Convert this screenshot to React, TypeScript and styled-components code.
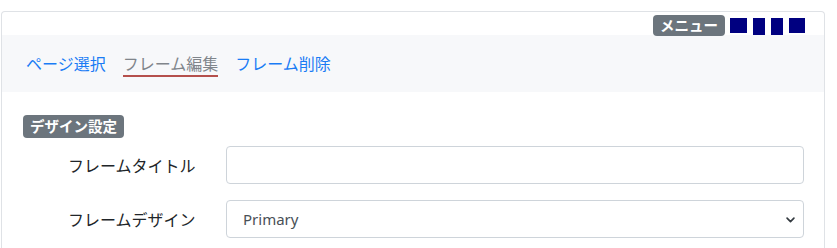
import React from 'react';
import styled, { createGlobalStyle } from 'styled-components';

const GlobalStyle = createGlobalStyle`
  body {
    margin: 0;
    background: #fff;
    font-family: "Noto Sans", "Noto Sans CJK JP", sans-serif;
    color: #212529;
  }
`;

const App: React.FC = () => (
  <>
    <GlobalStyle />
    <Page>
      <Card>
        <TopBar>
          <Badge>メニュー</Badge>
          <Squares>
            <Square w={17} />
            <Square w={12} tall />
            <Square w={12} tall />
            <Square w={16} />
          </Squares>
        </TopBar>
        <Header>
          <NavLink>ページ選択</NavLink>
          <NavLink active>フレーム編集</NavLink>
          <NavLink>フレーム削除</NavLink>
        </Header>
        <Body>
          <SectionBadge>デザイン設定</SectionBadge>
          <Form>
            <Label>フレームタイトル</Label>
            <Input type="text" />
            <Label>フレームデザイン</Label>
            <SelectWrap>
              <Select defaultValue="Primary">
                <option>Primary</option>
                <option>Secondary</option>
              </Select>
              <Chevron viewBox="0 0 16 16">
                <path d="M3 6l5 5 5-5" fill="none" stroke="#343a40" strokeWidth="2.4" strokeLinecap="round" strokeLinejoin="round" />
              </Chevron>
            </SelectWrap>
          </Form>
        </Body>
      </Card>
    </Page>
  </>
);

export default App;

const Page = styled.div`
  padding: 11px 12px 0 1px;
`;

const Card = styled.div`
  border: 1px solid #dfe2e6;
  border-bottom: none;
  border-radius: 4px 4px 0 0;
  background: #fff;
`;

const TopBar = styled.div`
  display: flex;
  justify-content: flex-end;
  align-items: flex-start;
  gap: 5px;
  height: 23px;
  padding: 3px 19px 0 0;
  box-sizing: border-box;
  position: relative;
  z-index: 1;
`;

const Badge = styled.span`
  display: inline-block;
  background: #6c757d;
  color: #fff;
  font-weight: 700;
  font-size: 14.5px;
  line-height: 21px;
  height: 21px;
  padding: 0 7px;
  border-radius: 4px;
`;

const Squares = styled.div`
  display: flex;
  gap: 6px;
  padding-top: 3px;
`;

const Square = styled.span<{ w: number; tall?: boolean }>`
  display: block;
  width: ${(p) => p.w}px;
  height: ${(p) => (p.tall ? 17 : 15)}px;
  background: #000080;
`;

const Header = styled.div`
  display: flex;
  align-items: center;
  gap: 17px;
  height: 57px;
  padding: 0 24px;
  background: #f7f8fa;
`;

const NavLink = styled.a<{ active?: boolean }>`
  font-size: 16px;
  line-height: 20px;
  color: ${(p) => (p.active ? '#80858b' : '#1a7cf5')};
  text-decoration: none;
  cursor: pointer;
  border-bottom: 2px solid ${(p) => (p.active ? '#b5504c' : 'transparent')};
  padding-top: 4px;
  padding-bottom: 1px;
`;

const Body = styled.div`
  padding: 23px 20px 10px 21px;
`;

const SectionBadge = styled.span`
  display: inline-block;
  background: #6c757d;
  color: #fff;
  font-weight: 700;
  font-size: 14.5px;
  line-height: 23px;
  height: 23px;
  padding: 0 7px;
  border-radius: 4px;
`;

const Form = styled.div`
  display: grid;
  grid-template-columns: 203px 1fr;
  row-gap: 16px;
  align-items: center;
  margin-top: 8px;
`;

const Label = styled.label`
  font-size: 16px;
  padding-left: 45px;
  color: #212529;
`;

const Input = styled.input`
  box-sizing: border-box;
  height: 38px;
  width: 100%;
  border: 1px solid #ced4da;
  border-radius: 4px;
  padding: 6px 16px;
  font-size: 15px;
  font-family: inherit;
  outline: none;
`;

const SelectWrap = styled.div`
  position: relative;
`;

const Select = styled.select`
  box-sizing: border-box;
  appearance: none;
  height: 38px;
  width: 100%;
  border: 1px solid #ced4da;
  border-radius: 4px;
  padding: 0 16px;
  font-size: 15px;
  font-family: "Noto Sans", sans-serif;
  color: #495057;
  background: #fff;
  outline: none;
`;

const Chevron = styled.svg`
  position: absolute;
  right: 8px;
  top: 14px;
  width: 11px;
  height: 11px;
  pointer-events: none;
`;
